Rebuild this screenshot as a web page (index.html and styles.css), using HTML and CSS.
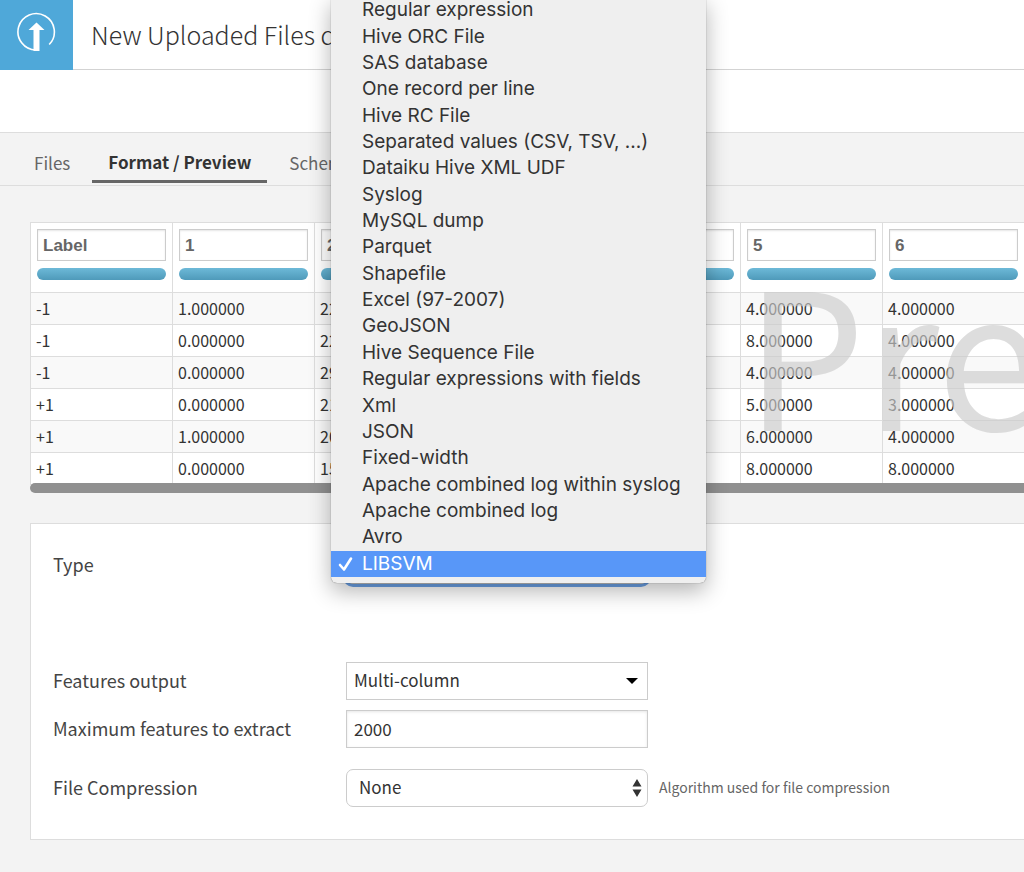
FILE: index.html
```
<!DOCTYPE html>
<html lang="en">
<head>
    <meta charset="UTF-8">
    <meta name="viewport" content="width=device-width, initial-scale=1.0">
    <title>New Uploaded Files dataset</title>
    <link rel="stylesheet" href="styles.css">
</head>
<body>
<header class="top">
    <div class="top-icon">
        <svg width="40" height="40" viewBox="0 0 40 40" aria-hidden="true">
            <path d="M20 38A18.200 18.200 0 1 1 33.200 32.500" fill="none" stroke="#fff" stroke-width="1.600"/>
            <path d="M20.500 10.500l8 7.500h-5v21h-6v-21h-5z" fill="#fff"/>
        </svg>
    </div>
    <h1 class="top-title">New Uploaded Files dataset</h1>
</header>
<nav class="tabs">
    <a class="tab" href="#files">Files</a>
    <a class="tab active" href="#format">Format / Preview</a>
    <a class="tab" href="#schema">Schema</a>
</nav>
<main class="content">
    <div class="preview">
        <table class="data">
            <thead>
            <tr>
                <th><input type="text" value="Label" aria-label="Column 0 name"><div class="quality"></div></th>
                <th><input type="text" value="1" aria-label="Column 1 name"><div class="quality"></div></th>
                <th><input type="text" value="2" aria-label="Column 2 name"><div class="quality"></div></th>
                <th><input type="text" value="3" aria-label="Column 3 name"><div class="quality"></div></th>
                <th><input type="text" value="4" aria-label="Column 4 name"><div class="quality"></div></th>
                <th><input type="text" value="5" aria-label="Column 5 name"><div class="quality"></div></th>
                <th><input type="text" value="6" aria-label="Column 6 name"><div class="quality"></div></th>
            </tr>
            </thead>
            <tbody>
            <tr><td>-1</td><td>1.000000</td><td>22.000000</td><td></td><td></td><td>4.000000</td><td>4.000000</td></tr>
            <tr><td>-1</td><td>0.000000</td><td>22.000000</td><td></td><td></td><td>8.000000</td><td>4.000000</td></tr>
            <tr><td>-1</td><td>0.000000</td><td>29.000000</td><td></td><td></td><td>4.000000</td><td>4.000000</td></tr>
            <tr><td>+1</td><td>0.000000</td><td>21.000000</td><td></td><td></td><td>5.000000</td><td>3.000000</td></tr>
            <tr><td>+1</td><td>1.000000</td><td>20.000000</td><td></td><td></td><td>6.000000</td><td>4.000000</td></tr>
            <tr><td>+1</td><td>0.000000</td><td>15.000000</td><td></td><td></td><td>8.000000</td><td>8.000000</td></tr>
            </tbody>
        </table>
        <div class="watermark">Preview</div>
        <div class="scrollbar"></div>
    </div>

    <form class="panel">
        <div class="row row-type">
            <label for="type">Type</label>
            <div class="control">
                <select id="type" class="native focused">
                    <option>LIBSVM</option>
                </select>
                <div class="menu" role="listbox" aria-label="Type">
                    <button type="button" role="option">Regular expression</button>
                    <button type="button" role="option">Hive ORC File</button>
                    <button type="button" role="option">SAS database</button>
                    <button type="button" role="option">One record per line</button>
                    <button type="button" role="option">Hive RC File</button>
                    <button type="button" role="option">Separated values (CSV, TSV, ...)</button>
                    <button type="button" role="option">Dataiku Hive XML UDF</button>
                    <button type="button" role="option">Syslog</button>
                    <button type="button" role="option">MySQL dump</button>
                    <button type="button" role="option">Parquet</button>
                    <button type="button" role="option">Shapefile</button>
                    <button type="button" role="option">Excel (97-2007)</button>
                    <button type="button" role="option">GeoJSON</button>
                    <button type="button" role="option">Hive Sequence File</button>
                    <button type="button" role="option">Regular expressions with fields</button>
                    <button type="button" role="option">Xml</button>
                    <button type="button" role="option">JSON</button>
                    <button type="button" role="option">Fixed-width</button>
                    <button type="button" role="option">Apache combined log within syslog</button>
                    <button type="button" role="option">Apache combined log</button>
                    <button type="button" role="option">Avro</button>
                    <button type="button" role="option" class="selected" aria-selected="true">
                        <svg class="check" width="16" height="16" viewBox="0 0 16 16" aria-hidden="true">
                            <path d="M2 9l4 4.500L13 2.500" fill="none" stroke="#fff" stroke-width="2.600" stroke-linecap="round" stroke-linejoin="round"/>
                        </svg>LIBSVM</button>
                </div>
            </div>
        </div>
        <div class="row">
            <label for="output">Features output</label>
            <div class="control">
                <select id="output">
                    <option>Multi-column</option>
                </select>
                <svg class="arrow" width="12" height="6" viewBox="0 0 12 6" aria-hidden="true"><path d="M0 0h12l-6 6z"/></svg>
            </div>
        </div>
        <div class="row">
            <label for="max">Maximum features to extract</label>
            <div class="control">
                <input id="max" type="text" value="2000">
            </div>
        </div>
        <div class="row row-compression">
            <label for="compression">File Compression</label>
            <div class="control">
                <select id="compression" class="native">
                    <option>None</option>
                </select>
                <svg class="arrow updown" width="10" height="18" viewBox="0 0 10 18" aria-hidden="true"><path d="M5 0l4.500 7.500h-9zM5 18l4.500-7.500h-9z" fill="#333"/></svg>
            </div>
            <span class="help">Algorithm used for file compression</span>
        </div>
    </form>
</main>
</body>
</html>
```
FILE: styles.css
```
* {
    box-sizing: border-box;
}

body {
    margin: 0;
    background: #f3f3f3;
    color: #333;
    font: 18px/24px "Noto Sans CJK SC", "Noto Sans", sans-serif;
    overflow: hidden;
}

input,
select,
button {
    font: inherit;
    color: inherit;
}

/* header */
.top {
    display: flex;
    align-items: flex-start;
    height: 132px;
    background: #fff;
}
.top-icon {
    width: 73px;
    height: 70px;
    padding: 12px 16px;
    background: #4fa8d9;
}
.top-icon svg {
    display: block;
}
.top-title {
    flex: 1;
    height: 70px;
    margin: 0;
    padding-left: 18px;
    border-bottom: 1px solid #d3d3d3;
    font-size: 25px;
    font-weight: 300;
    line-height: 68px;
}

/* tabs */
.tabs {
    display: flex;
    align-items: flex-start;
    gap: 4px;
    height: 54px;
    padding-left: 16px;
    border-top: 1px solid #ddd;
    border-bottom: 1px solid #ddd;
}
.tab {
    height: 50px;
    padding: 0 18px;
    color: #666;
    font-size: 17px;
    line-height: 60px;
    text-decoration: none;
}
.tab.active {
    padding: 0 16px;
    border-bottom: 3px solid #666;
    color: #333;
    font-weight: 700;
    line-height: 58px;
}

.content {
    padding: 36px 0 32px 30px;
}

/* data preview */
.preview {
    position: relative;
    overflow: hidden;
    margin-bottom: 30px;
}
.data {
    width: 995px;
    table-layout: fixed;
    border-collapse: collapse;
    border: 1px solid #ddd;
    background: #fff;
    color: #333;
    font-size: 16px;
}
.data th,
.data td {
    width: 142px;
    border: 1px solid #ddd;
    text-align: left;
}
.data th {
    height: 70px;
    padding: 6px 6px 12px;
}
.data td {
    height: 32px;
    padding: 0 5px 2px;
    line-height: 24px;
}
.data tbody tr:nth-child(odd) {
    background: #f9f9f9;
}
.data input {
    display: block;
    width: 100%;
    height: 32px;
    padding: 2px 5px 0;
    border: 1px solid #ccc;
    box-shadow: inset 0 1px 2px rgba(0, 0, 0, .1);
    color: #666;
    font: bold 17px "Liberation Sans", Arial, sans-serif;
}
.quality {
    height: 12px;
    margin-top: 7px;
    border-radius: 6px;
    background: linear-gradient(#6db9d8, #4f9aba);
}
.watermark {
    position: absolute;
    top: 53px;
    left: 715px;
    color: #ccc;
    opacity: .65;
    font-size: 190px;
    line-height: 148px;
    pointer-events: none;
}
.scrollbar {
    position: relative;
    height: 10px;
    margin-top: -2px;
    border-radius: 5px 0 0 5px;
    background: #909090;
}

/* settings */
.panel {
    display: flex;
    flex-direction: column;
    gap: 10px;
    padding: 22px 0 32px 22px;
    border: 1px solid #ddd;
    border-right: 0;
    background: #fff;
}
.row {
    display: flex;
    align-items: center;
}
.row-type {
    margin-bottom: 68px;
}
.row-compression {
    margin-top: 11px;
}
.row label {
    width: 293px;
    padding-bottom: 2px;
    color: #444;
}
.control {
    position: relative;
    width: 302px;
}
.control > select,
.control > input {
    display: block;
    width: 100%;
    height: 38px;
    padding: 0 7px 2px;
    border: 1px solid #ccc;
    border-radius: 0;
    background: #fff;
    font-size: 17px;
    appearance: none;
}
.control > input {
    box-shadow: inset 0 1px 3px rgba(0, 0, 0, .1);
}
.control > .native {
    padding: 0 12px 2px;
    border-radius: 7px;
}
.control > .focused {
    box-shadow: 0 0 0 3px #6ba1e6;
}
.arrow {
    position: absolute;
    top: 16px;
    right: 10px;
    pointer-events: none;
}
.updown {
    top: 10px;
    right: 6px;
}
.help {
    padding: 0 0 2px 11px;
    color: #666;
    font-size: 14px;
}

/* opened drop-down, grows upwards from its select */
.menu {
    position: absolute;
    bottom: 1px;
    left: -15px;
    display: flex;
    flex-direction: column;
    width: 375px;
    height: 586px;
    padding-bottom: 6px;
    border-radius: 0 0 6px 6px;
    background: #efefef;
    box-shadow: 0 0 1px rgba(0, 0, 0, .6), 0 8px 22px rgba(0, 0, 0, .3);
    font: 19px/24px Inter, Roboto, sans-serif;
}
.menu button {
    position: relative;
    flex: 1;
    padding: 0 0 0 31px;
    border: 0;
    background: none;
    text-align: left;
    white-space: nowrap;
}
.menu .selected {
    background: #5897f8;
    color: #fff;
}
.check {
    position: absolute;
    top: 5px;
    left: 7px;
}
```
